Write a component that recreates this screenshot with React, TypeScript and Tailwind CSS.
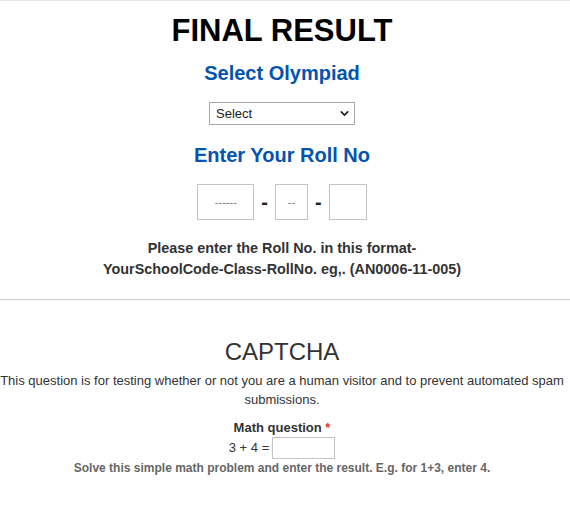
import { ChevronDown } from 'lucide-react';

const font = { fontFamily: '"Liberation Sans", Arial, sans-serif' };

function RollBox({ width, placeholder }: { width: string; placeholder?: string }) {
  return (
    <input
      type="text"
      placeholder={placeholder}
      className={`${width} h-[36px] border border-[#c4c4c4] bg-white text-center text-[11px] text-[#333] placeholder:text-[#777] outline-none`}
    />
  );
}

export default function App() {
  return (
    <div className="w-[570px] h-[506px] bg-white overflow-hidden border-t border-[#e6e6e6] text-[#333]" style={font}>
      <div className="w-[564px] flex flex-col items-center">
        <h1 className="mt-[11px] text-[31px] leading-[38px] font-bold text-black">FINAL RESULT</h1>
        <h2 className="mt-[11px] text-[20px] leading-[24px] font-bold text-[#0353b0]">Select Olympiad</h2>
        <div className="relative mt-[17px] w-[146px] h-[23px] border border-[#a9a9a9] bg-white">
          <span className="absolute left-[6px] top-[3px] text-[13px] leading-[16px] text-[#222]">Select</span>
          <ChevronDown className="absolute right-[3px] top-[4px] w-[13px] h-[13px] text-[#222]" strokeWidth={3} />
        </div>
        <h2 className="mt-[18px] text-[20px] leading-[24px] font-bold text-[#0353b0]">Enter Your Roll No</h2>
        <div className="mt-[17px] flex items-center">
          <RollBox width="w-[57px]" placeholder="------" />
          <span className="mx-[7px] text-[20px] font-bold text-[#222]">-</span>
          <RollBox width="w-[33px]" placeholder="--" />
          <span className="mx-[7px] text-[20px] font-bold text-[#222]">-</span>
          <RollBox width="w-[38px]" />
        </div>
        <p className="mt-[18px] text-center text-[14.4px] leading-[21px] font-bold text-[#333]">
          Please enter the Roll No. in this format-
          <br />
          YourSchoolCode-Class-RollNo. eg,. (AN0006-11-005)
        </p>
      </div>

      <hr className="mt-[19px] border-t border-[#cccccc]" />

      <div className="w-[564px] flex flex-col items-center">
        <h3 className="mt-[38px] text-[24px] leading-[28px] text-[#333]">CAPTCHA</h3>
        <p className="mt-[5px] text-center text-[13px] leading-[19px] text-[#333]">
          This question is for testing whether or not you are a human visitor and to prevent automated spam submissions.
        </p>
        <div className="mt-[10px] text-[13px] leading-[17px] font-bold text-[#333]">
          Math question <span className="text-[#e32]">*</span>
        </div>
        <div className="mt-[1px] flex items-center gap-[3px] text-[13px] text-[#333]">
          <span>3 + 4 =</span>
          <input type="text" className="w-[63px] h-[22px] border border-[#c4c4c4] bg-white outline-none" />
        </div>
        <p className="mt-[2px] text-center text-[12px] leading-[15px] font-bold text-[#666]">
          Solve this simple math problem and enter the result. E.g. for 1+3, enter 4.
        </p>
      </div>
    </div>
  );
}
